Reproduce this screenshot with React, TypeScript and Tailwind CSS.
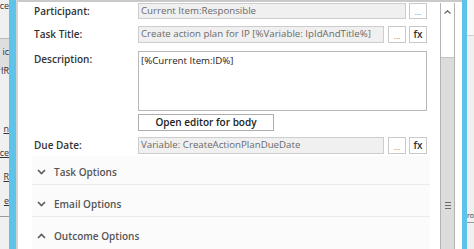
import React from "react";

function Chevron({ up }: { up?: boolean }) {
  return (
    <svg width="9" height="6" viewBox="0 0 9 6" className="shrink-0">
      <polyline
        points={up ? "1,5 4.5,1.5 8,5" : "1,1 4.5,4.5 8,1"}
        fill="none"
        stroke="#5a5a5a"
        strokeWidth="1.6"
      />
    </svg>
  );
}

function SmallButton({ children, bold }: { children: React.ReactNode; bold?: boolean }) {
  return (
    <div
      className={`w-[18px] h-full shrink-0 border border-[#c9c9c9] bg-white flex items-center justify-center ${
        bold ? "text-[10px] font-semibold text-[#333]" : "text-[8px] text-[#777] leading-none pt-[2px]"
      }`}
    >
      {children}
    </div>
  );
}

function ReadField({ value, width }: { value: string; width: string }) {
  return (
    <div
      className={`${width} h-full shrink-0 border border-[#cdcdcd] bg-[#f0f0f0] px-[2px] flex items-center text-[9.7px] text-[#6a6a6a] whitespace-nowrap overflow-hidden`}
    >
      {value}
    </div>
  );
}

function Label({ children, top }: { children: React.ReactNode; top?: boolean }) {
  return (
    <div
      className={`w-[120px] pl-[16px] shrink-0 text-[10px] font-semibold text-[#333] flex ${
        top ? "items-start pt-[1px]" : "items-center"
      }`}
    >
      {children}
    </div>
  );
}

function Section({ title, up, height, pt, border }: { title: string; up?: boolean; height: string; pt: string; border?: boolean }) {
  return (
    <div
      className={`${height} ${pt} ${border ? "border-t border-[#ebebeb]" : ""} ml-[14px] w-[398px] bg-[#fbfbfb] flex items-start`}
    >
      <div className="flex items-center gap-[8px] pl-[5px] h-[14px]">
        <Chevron up={up} />
        <span className="text-[10px] font-semibold text-[#555]">{title}</span>
      </div>
    </div>
  );
}

export default function App() {
  return (
    <div className="w-[474px] h-[249px] overflow-hidden flex bg-[#f0f0f0] font-['Open_Sans',sans-serif]">
      {/* background window, left */}
      <div className="w-[9px] shrink-0 overflow-hidden flex flex-col items-end text-[9px] text-[#333] leading-none">
        <div className="pt-[1px] h-[38px]">ce</div>
        <div className="w-full h-[32px] bg-[#dedede] border-y border-[#b9b9b9] flex flex-col items-end pt-[8px] gap-[10px]">
          <span>ic</span>
          <span>IR</span>
        </div>
        <div className="h-[54px]" />
        <div className="underline h-[24px]">n</div>
        <div className="underline h-[24px]">ce</div>
        <div className="underline h-[24px]">R</div>
        <div className="underline h-[20px]">e</div>
        <div className="w-full border-t border-[#9a9a9a]" />
      </div>
      <div className="w-[7px] shrink-0 bg-[#5ec3e8]" />
      <div className="w-[2px] shrink-0 bg-[#d2d2d2]" />

      {/* dialog */}
      <div className="w-[444px] shrink-0 flex flex-col bg-white">
        <div className="h-[2px] shrink-0 bg-[#c9c9c9]" />
        <div className="flex flex-1 min-h-0">
          <div className="w-[422px] shrink-0 flex flex-col">
            <div className="flex h-[16px] mt-[1px]">
              <Label>Participant:</Label>
              <ReadField width="w-[268px]" value="Current Item:Responsible" />
              <div className="w-[3px]" />
              <SmallButton>...</SmallButton>
            </div>

            <div className="flex h-[17px] mt-[7px]">
              <Label>Task Title:</Label>
              <ReadField width="w-[246px]" value="Create action plan for IP [%Variable: IpIdAndTitle%]" />
              <div className="w-[4px]" />
              <SmallButton>...</SmallButton>
              <div className="w-[3px]" />
              <SmallButton bold>fx</SmallButton>
            </div>

            <div className="flex h-[60px] mt-[8px]">
              <Label top>Description:</Label>
              <div className="w-[289px] h-full border border-[#b9b9b9] bg-white px-[2px] pt-[2px] text-[9.7px] text-[#222]">
                [%Current Item:ID%]
              </div>
            </div>

            <div className="flex h-[17px] mt-[3px] pl-[120px]">
              <div className="w-[136px] h-full border border-[#adadad] bg-white flex items-center justify-center text-[10px] font-semibold text-[#222]">
                Open editor for body
              </div>
            </div>

            <div className="flex h-[17px] mt-[6px]">
              <Label>Due Date:</Label>
              <ReadField width="w-[246px]" value="Variable: CreateActionPlanDueDate" />
              <div className="w-[4px]" />
              <SmallButton>...</SmallButton>
              <div className="w-[3px]" />
              <SmallButton bold>fx</SmallButton>
            </div>

            <div className="mt-[2px] flex flex-col">
              <Section title="Task Options" height="h-[28px]" pt="pt-[9px]" />
              <Section title="Email Options" height="h-[32px]" pt="pt-[12px]" border />
              <Section title="Outcome Options" up height="h-[33px]" pt="pt-[12px]" border />
            </div>
          </div>

          {/* scrollbar */}
          <div className="w-[15px] shrink-0 mt-[1px] border-x border-[#b3b3b3] flex flex-col bg-white">
            <div className="h-[17px] flex items-center justify-center">
              <svg width="7" height="4" viewBox="0 0 7 4">
                <polyline points="0.5,3.5 3.5,0.8 6.5,3.5" fill="none" stroke="#606060" strokeWidth="1.1" />
              </svg>
            </div>
            <div className="h-[37px] bg-white" />
            <div className="flex-1 bg-[#dcdcdc] border-t border-[#c6c6c6] flex flex-col items-center pt-[144px] gap-[1px]">
              <div className="w-[6px] h-[1px] bg-[#6a6a6a]" />
              <div className="w-[6px] h-[1px] bg-[#6a6a6a] mt-[1px]" />
              <div className="w-[6px] h-[1px] bg-[#6a6a6a] mt-[1px]" />
            </div>
          </div>
          <div className="w-[7px] shrink-0 bg-white" />
        </div>
      </div>

      <div className="w-[5px] shrink-0 bg-[#5ec3e8]" />
      {/* background window, right */}
      <div className="flex-1 flex flex-col text-[7px] text-[#333] leading-none overflow-hidden">
        <div className="h-[36px] border-b border-[#cfcfcf] bg-[#f7f7f7]" />
        <div className="h-[176px]" />
        <div className="h-[10px] whitespace-nowrap">ro</div>
        <div className="border-t border-[#9a9a9a]" />
      </div>
    </div>
  );
}
